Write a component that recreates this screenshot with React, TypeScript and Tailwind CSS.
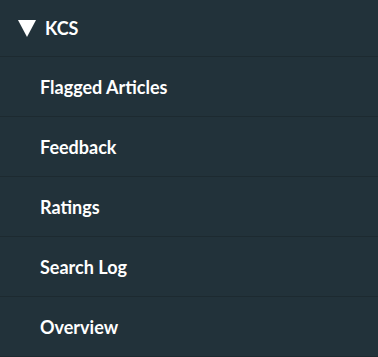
import React from 'react';

const items = ['Flagged Articles', 'Feedback', 'Ratings', 'Search Log', 'Overview'];

const App = () => {
  return (
    <div className="w-[378px] h-[357px] bg-[#22323a] text-white font-['Lato',sans-serif] overflow-hidden">
      {/* Section header */}
      <div className="h-[57px] flex items-center pl-[18px] pt-[1px] border-b border-[#1d2a30]">
        <svg width="18" height="17" viewBox="0 0 18 17" className="mr-[9px]">
          <polygon points="0,0 18,0 9,17" fill="#ffffff" />
        </svg>
        <span className="text-[18px] font-bold">KCS</span>
      </div>

      {/* Sub items */}
      {items.map((item) => (
        <div key={item} className="h-[60px] flex items-center pl-[40px] pt-[2px] border-b border-[#1d2a30]">
          <span className="text-[18px] font-bold">{item}</span>
        </div>
      ))}
    </div>
  );
};

export default App;
